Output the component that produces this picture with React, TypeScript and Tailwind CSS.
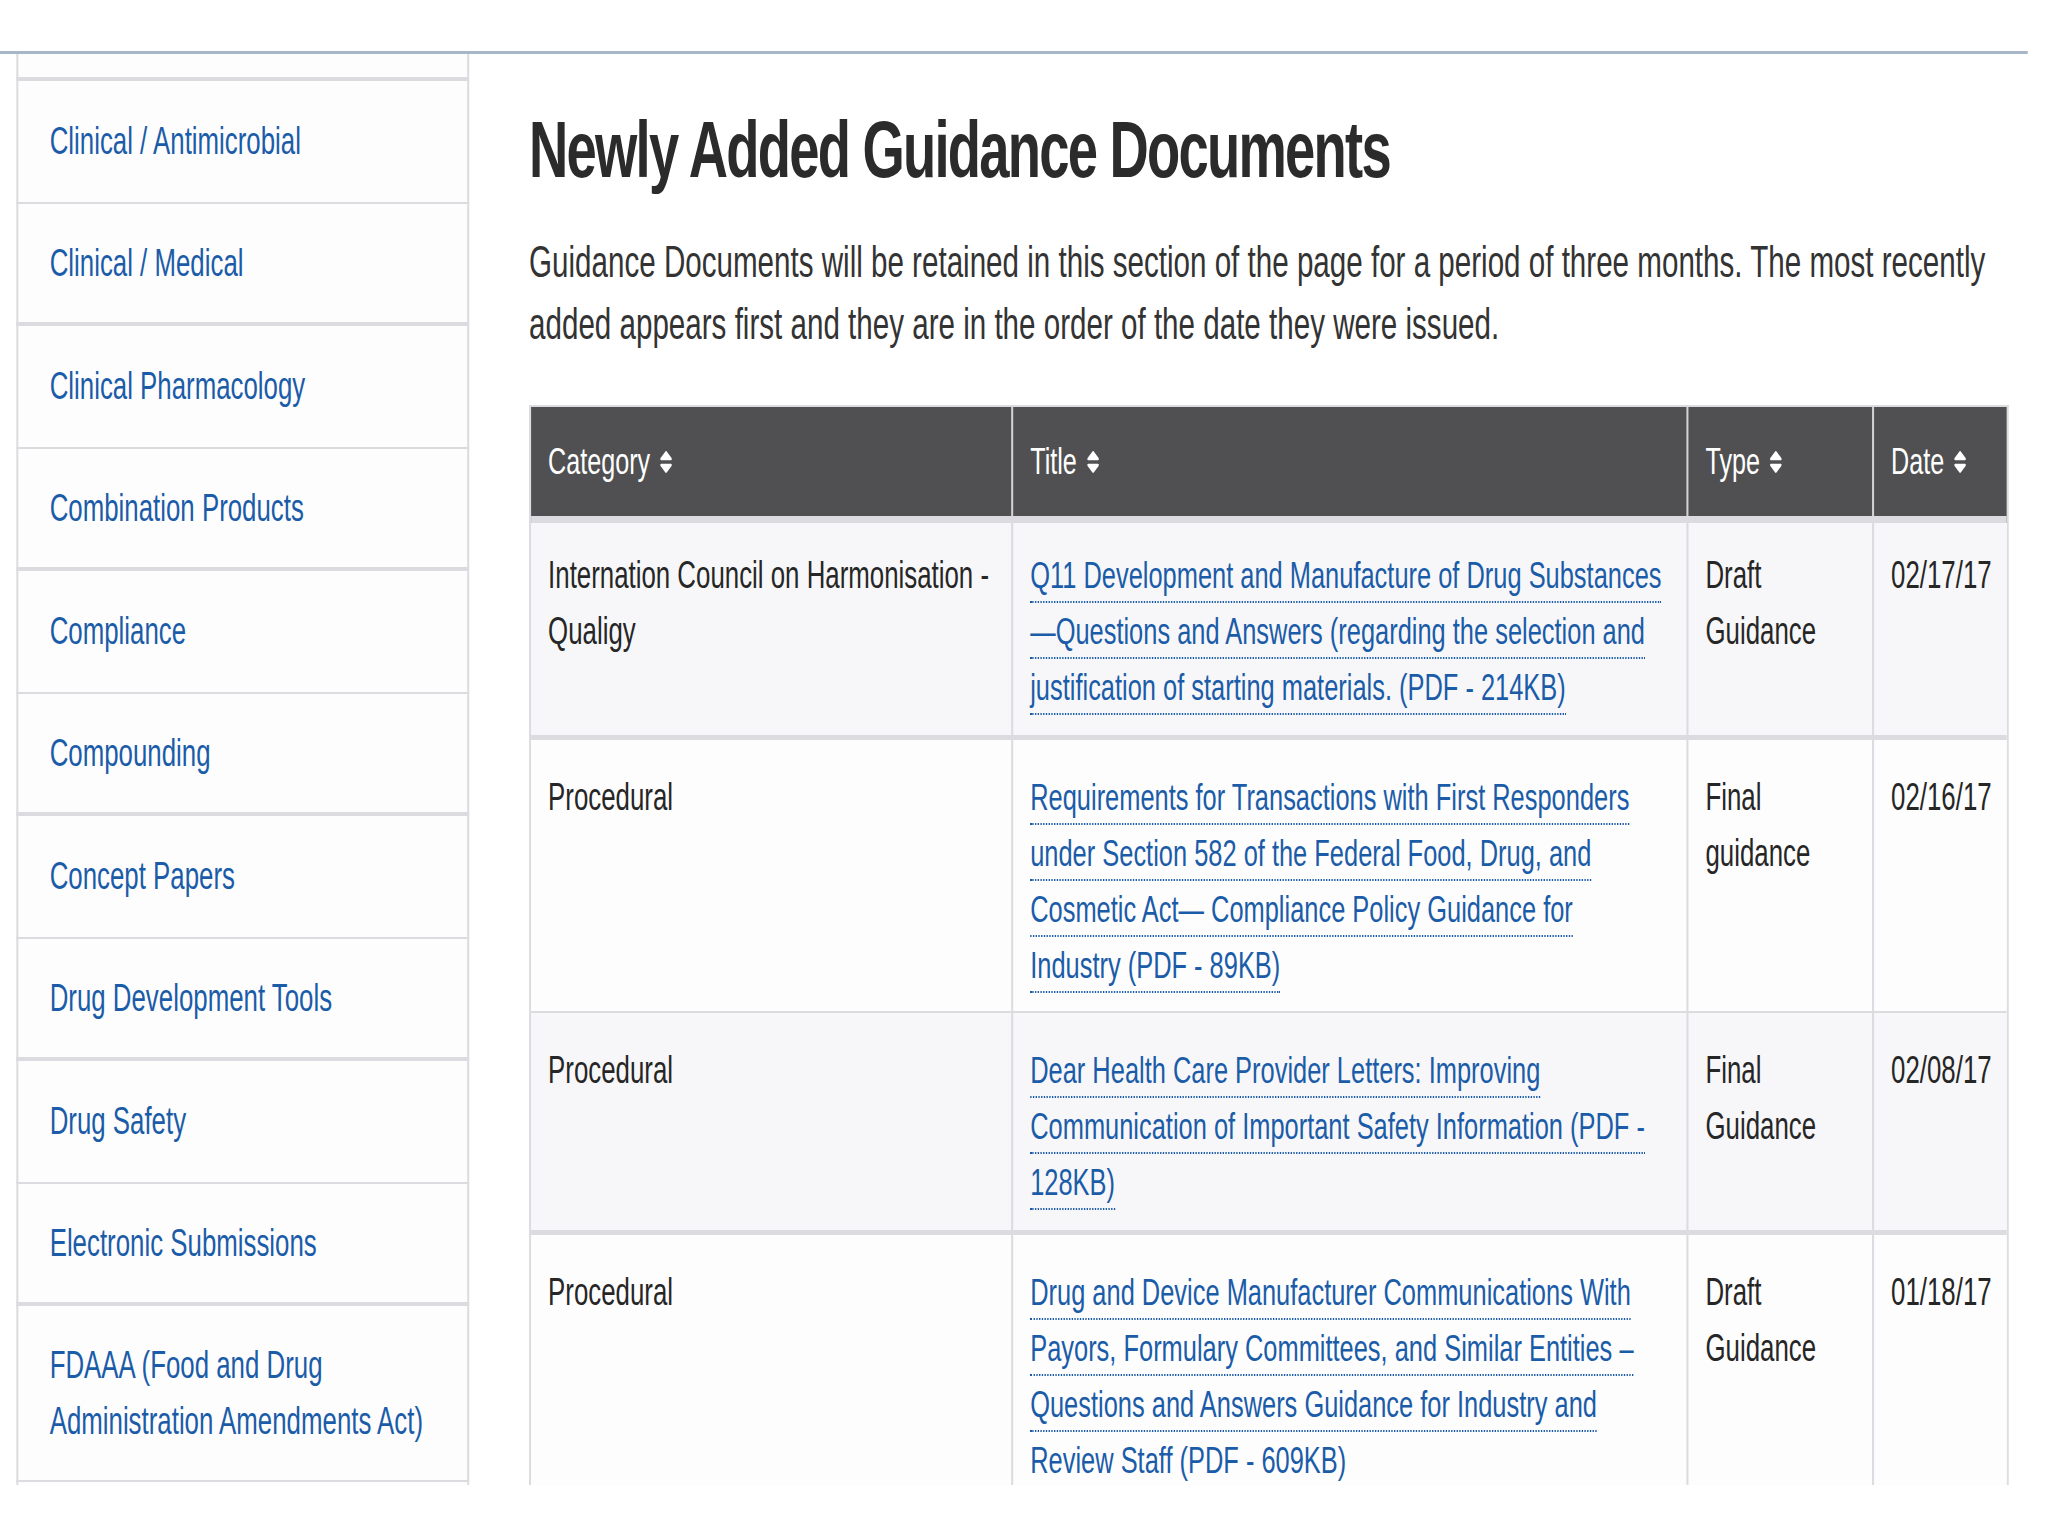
import React from "react";

const sidebarItems: { lines: string[]; thick: boolean }[] = [
  { lines: ["Clinical / Antimicrobial"], thick: false },
  { lines: ["Clinical / Medical"], thick: true },
  { lines: ["Clinical Pharmacology"], thick: false },
  { lines: ["Combination Products"], thick: true },
  { lines: ["Compliance"], thick: false },
  { lines: ["Compounding"], thick: true },
  { lines: ["Concept Papers"], thick: false },
  { lines: ["Drug Development Tools"], thick: true },
  { lines: ["Drug Safety"], thick: false },
  { lines: ["Electronic Submissions"], thick: true },
];

type Row = {
  category: string[];
  title: string[];
  type: string[];
  date: string;
  h: string;
  bg: string;
  border: string;
  pt: string;
};

const rows: Row[] = [
  {
    category: ["Internation Council on Harmonisation -", "Qualigy"],
    title: [
      "Q11 Development and Manufacture of Drug Substances",
      "\u2014Questions and Answers (regarding the selection and",
      "justification of starting materials. (PDF - 214KB)",
    ],
    type: ["Draft", "Guidance"],
    date: "02/17/17",
    h: "h-[217px]",
    bg: "bg-[#f7f7f9]",
    border: "border-b-[5px]",
    pt: "pt-[24px]",
  },
  {
    category: ["Procedural"],
    title: [
      "Requirements for Transactions with First Responders",
      "under Section 582 of the Federal Food, Drug, and",
      "Cosmetic Act\u2014 Compliance Policy Guidance for",
      "Industry (PDF - 89KB)",
    ],
    type: ["Final", "guidance"],
    date: "02/16/17",
    h: "h-[273px]",
    bg: "bg-[#fdfdfe]",
    border: "border-b-2",
    pt: "pt-[29px]",
  },
  {
    category: ["Procedural"],
    title: [
      "Dear Health Care Provider Letters: Improving",
      "Communication of Important Safety Information (PDF -",
      "128KB)",
    ],
    type: ["Final", "Guidance"],
    date: "02/08/17",
    h: "h-[222px]",
    bg: "bg-[#f7f7f9]",
    border: "border-b-[5px]",
    pt: "pt-[29px]",
  },
  {
    category: ["Procedural"],
    title: [
      "Drug and Device Manufacturer Communications With",
      "Payors, Formulary Committees, and Similar Entities \u2013",
      "Questions and Answers Guidance for Industry and",
      "Review Staff (PDF - 609KB)",
    ],
    type: ["Draft", "Guidance"],
    date: "01/18/17",
    h: "h-[300px]",
    bg: "bg-[#fdfdfe]",
    border: "border-b-2",
    pt: "pt-[29px]",
  },
];

function SortIcon() {
  return (
    <svg
      viewBox="0 0 320 512"
      preserveAspectRatio="none"
      className="ml-[14px] w-[19px] h-[28px] fill-white shrink-0"
    >
      <path d="M41 288h238c21.4 0 32.1 25.9 17 41L177 448c-9.4 9.4-24.6 9.4-33.9 0L24 329c-15.1-15.1-4.4-41 17-41zm255-105L177 64c-9.4-9.4-24.6-9.4-33.9 0L24 183c-15.1 15.1-4.4 41 17 41h238c21.4 0 32.1-25.9 17-41z" />
    </svg>
  );
}

function Lines({ lines }: { lines: string[] }) {
  return (
    <>
      {lines.map((l, i) => (
        <React.Fragment key={i}>
          {i > 0 && <br />}
          {l}
        </React.Fragment>
      ))}
    </>
  );
}

export default function App() {
  const headers = ["Category", "Title", "Type", "Date"];
  return (
    <div className="w-[2048px] h-[1536px] overflow-hidden bg-white">
      <div className="w-[3012px] h-[1485px] overflow-hidden origin-top-left scale-x-[0.68] bg-white font-['Liberation_Sans',Arial,sans-serif]">
        <div className="h-[51px]" />
        <div className="h-[3px] w-[2982px] bg-[#a8b7c8]" />
        <div className="flex items-start">
          {/* Sidebar */}
          <aside className="ml-[24px] w-[666px] shrink-0">
            <div className="h-[27px] border-x-[3px] border-b-[4px] border-[#dcdce0] bg-[#fdfdfe]" />
            {sidebarItems.map((it, i) => (
              <div
                key={i}
                className={`h-[122.5px] flex items-center pl-[46px] border-x-[3px] border-[#dcdce0] bg-[#fdfdfe] ${
                  it.thick ? "border-b-[4px]" : "border-b-2"
                }`}
              >
                <a className="text-[38px] leading-[56px] text-[#1b5ca8] whitespace-nowrap">
                  <Lines lines={it.lines} />
                </a>
              </div>
            ))}
            <div className="h-[176px] flex items-center pl-[46px] border-x-[3px] border-b-2 border-[#dcdce0] bg-[#fdfdfe]">
              <a className="text-[38px] leading-[56px] text-[#1b5ca8] whitespace-nowrap">
                FDAAA (Food and Drug
                <br />
                Administration Amendments Act)
              </a>
            </div>
            <div className="h-[60px] border-x-[3px] border-[#dcdce0] bg-[#fdfdfe]" />
          </aside>

          {/* Main */}
          <main className="ml-[88px] w-[2176px] shrink-0">
            <h1 className="mt-[52px] text-[80px] leading-[88px] font-bold tracking-[-2.6px] text-[#2b2b2b] whitespace-nowrap">
              Newly Added Guidance Documents
            </h1>
            <p className="mt-[37px] text-[43.5px] leading-[62px] text-[#333333]">
              Guidance Documents will be retained in this section of the page for a period of three months. The most
              recently added appears first and they are in the order of the date they were issued.
            </p>

            <div className="mt-[50px] border-x-[3px] border-t-2 border-[#dcdce0]">
              <div className="grid grid-cols-[706px_993px_273px_198px] h-[116px] bg-[#505052] border-b-[7px] border-[#dcdce0]">
                {headers.map((h, i) => (
                  <div
                    key={h}
                    className={`flex items-center px-[25px] text-[37px] text-white ${
                      i > 0 ? "border-l-[3px] border-[#d2d2d4]" : ""
                    }`}
                  >
                    <span>{h}</span>
                    <SortIcon />
                  </div>
                ))}
              </div>

              {rows.map((r, ri) => (
                <div
                  key={ri}
                  className={`grid grid-cols-[706px_993px_273px_198px] ${r.h} ${r.bg} ${r.border} border-[#dcdce0] text-[38px] leading-[56px] text-[#262626]`}
                >
                  <div className={`${r.pt} px-[25px] whitespace-nowrap`}>
                    <Lines lines={r.category} />
                  </div>
                  <div className={`${r.pt} px-[25px] border-l-[3px] border-[#dcdce0] whitespace-nowrap`}>
                    <a className="text-[37.4px] text-[#1b5ca8] border-b-2 border-dotted border-[#1b5ca8] pb-[5px]">
                      <Lines lines={r.title} />
                    </a>
                  </div>
                  <div className={`${r.pt} px-[25px] border-l-[3px] border-[#dcdce0] whitespace-nowrap`}>
                    <Lines lines={r.type} />
                  </div>
                  <div className={`${r.pt} px-[25px] border-l-[3px] border-[#dcdce0] whitespace-nowrap`}>
                    {r.date}
                  </div>
                </div>
              ))}
            </div>
          </main>
        </div>
      </div>
    </div>
  );
}
